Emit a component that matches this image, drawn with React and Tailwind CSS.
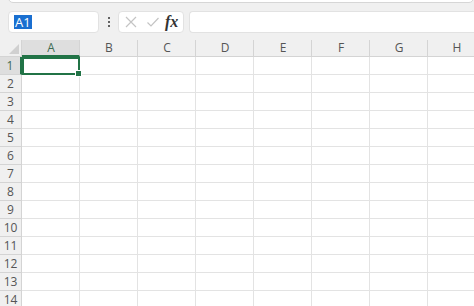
import React from "react";

const cols = ["A", "B", "C", "D", "E", "F", "G", "H"];
const rows = Array.from({ length: 14 }, (_, i) => i + 1);

export default function App() {
  return (
    <div
      className="w-[474px] h-[306px] overflow-hidden bg-white text-[#444]"
      style={{ fontFamily: '"Open Sans", "Noto Sans", sans-serif' }}
    >
      <div className="bg-[#f0f0f0] h-[40px] relative">
        <div className="absolute left-[8px] right-0 top-[-6px] h-[9px] bg-white border border-[#d6d6d6] rounded-b-[5px]" />
        <div className="flex items-center h-[40px] pt-[4px] pl-[8px]">
          <div className="w-[91px] h-[22px] bg-white border border-[#e2e2e2] rounded-[4px] flex items-center pl-[5px]">
            <span className="bg-[#1a6fd0] text-white text-[13px] leading-[14px] px-[1px]">A1</span>
          </div>
          <div className="w-[19px] flex flex-col items-center gap-[2px]">
            <span className="w-[2px] h-[2px] bg-[#333] rounded-full" />
            <span className="w-[2px] h-[2px] bg-[#333] rounded-full" />
            <span className="w-[2px] h-[2px] bg-[#333] rounded-full" />
          </div>
          <div className="w-[66px] h-[22px] bg-white border border-[#e2e2e2] rounded-[4px] flex items-center pl-[5px]">
            <svg width="14" height="14" viewBox="0 0 14 14" className="mr-[8px]">
              <path d="M2 2 L12 12 M12 2 L2 12" stroke="#c4c4c4" strokeWidth="1.2" fill="none" />
            </svg>
            <svg width="14" height="14" viewBox="0 0 14 14" className="mr-[5px]">
              <path d="M1.5 7.5 L5 11 L12.5 3" stroke="#c4c4c4" strokeWidth="1.2" fill="none" />
            </svg>
            <span
              className="text-[16px] italic font-bold text-[#333] leading-none"
              style={{ fontFamily: '"Liberation Serif", "DejaVu Serif", serif' }}
            >
              fx
            </span>
          </div>
          <div className="flex-1 ml-[5px] h-[22px] bg-white border border-[#e2e2e2] border-r-0 rounded-l-[4px]" />
        </div>
      </div>

      <div className="grid grid-cols-[22px_repeat(8,58px)] w-[486px]">
        <div className="h-[17px] bg-[#f0f0f0] border-r border-b border-[#d4d4d4] flex items-end justify-end p-[2px]">
          <svg width="10" height="10" viewBox="0 0 10 10">
            <path d="M10 0 L10 10 L0 10 Z" fill="#d0d0d0" />
          </svg>
        </div>
        {cols.map((c, i) => (
          <div
            key={c}
            className={
              i === 0
                ? "h-[17px] bg-[#dedede] border-r border-[#d4d4d4] border-b-2 border-b-[#217346] flex items-center justify-center pl-[1px] text-[12px] text-[#3f6b52]"
                : "h-[17px] bg-[#f0f0f0] border-r border-b border-[#d4d4d4] flex items-center justify-center pl-[1px] text-[12px] text-[#555]"
            }
          >
            {c}
          </div>
        ))}
        {rows.map((r) => (
          <React.Fragment key={r}>
            <div
              className={
                r === 1
                  ? "h-[18px] bg-[#dedede] border-b border-[#d4d4d4] border-r-2 border-r-[#217346] flex items-center justify-center text-[12px] text-[#3f6b52]"
                  : "h-[18px] bg-[#f0f0f0] border-r border-b border-[#d4d4d4] flex items-center justify-center text-[12px] text-[#555]"
              }
            >
              {r}
            </div>
            {cols.map((c, i) =>
              r === 1 && i === 0 ? (
                <div key={c} className="h-[18px] border-2 border-[#217346] relative">
                  <span className="absolute right-[-4px] bottom-[-4px] w-[5px] h-[5px] bg-[#217346] border border-white box-content" />
                </div>
              ) : (
                <div key={c} className="h-[18px] border-r border-b border-[#e3e3e3]" />
              )
            )}
          </React.Fragment>
        ))}
      </div>
    </div>
  );
}
